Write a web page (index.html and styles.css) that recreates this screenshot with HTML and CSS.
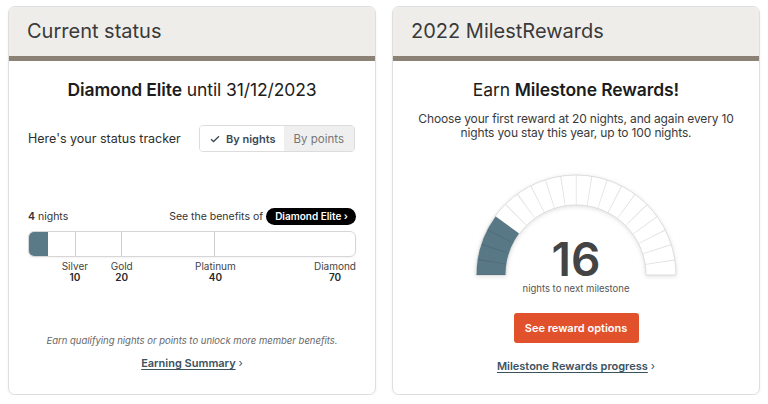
FILE: index.html
```html
<!DOCTYPE html>
<html>
<head>
<meta charset="utf-8">
<link rel="stylesheet" href="styles.css">
</head>
<body>
<div class="page">
  <section class="card">
    <header class="card-head">Current status</header>
    <div class="card-body">
      <h2 class="title"><b>Diamond Elite</b> until 31/12/2023</h2>
      <div class="tracker-row">
        <span class="tracker-label">Here's your status tracker</span>
        <div class="toggle">
          <span class="opt active"><svg class="check" viewBox="0 0 12 10" width="10" height="8"><path d="M1 5.2 L4.2 8.2 L11 1.5" fill="none" stroke="#3b4a55" stroke-width="1.6"/></svg>By nights</span>
          <span class="opt">By points</span>
        </div>
      </div>
      <div class="bar-head">
        <span class="nights"><b>4</b> nights</span>
        <span class="benefits">See the benefits of <span class="pill">Diamond Elite ›</span></span>
      </div>
      <div class="bar">
        <div class="fill" style="width:5.7%"></div>
        <div class="seg" style="width:8.58%"></div>
        <div class="seg" style="width:14.29%"></div>
        <div class="seg" style="width:28.57%"></div>
      </div>
      <div class="levels">
        <div class="lvl" style="left:14.29%"><span>Silver</span><b>10</b></div>
        <div class="lvl" style="left:28.57%"><span>Gold</span><b>20</b></div>
        <div class="lvl" style="left:57.14%"><span>Platinum</span><b>40</b></div>
        <div class="lvl last"><span>Diamond</span><b>70</b></div>
      </div>
      <div class="foot">
        <p class="note">Earn qualifying nights or points to unlock more member benefits.</p>
        <a class="link">Earning Summary</a><span class="chev">›</span>
      </div>
    </div>
  </section>
  <section class="card">
    <header class="card-head">2022 MilestRewards</header>
    <div class="card-body center">
      <h2 class="title">Earn <b>Milestone Rewards!</b></h2>
      <p class="desc">Choose your first reward at 20 nights, and again every 10<br>nights you stay this year, up to 100 nights.</p>
      <svg class="gauge" viewBox="0 0 210 106" width="210" height="106">
        <path d="M5 105 A100 100 0 0 1 205 105 L175 105 A70 70 0 0 0 35 105 Z" fill="#fff" stroke="#dcdcdc" stroke-width="1"/>
        <path d="M20 105 A85 85 0 0 1 190 105" fill="none" stroke="#587886" stroke-width="29" stroke-dasharray="53.4 1000"/>
        <path d="M20 105 A85 85 0 0 1 190 105" fill="none" stroke="rgba(0,0,0,0.12)" stroke-width="29" stroke-dasharray="0.8 12.552" stroke-dashoffset="0.4"/>
      </svg>
      <div class="count">16</div>
      <div class="count-label">nights to next milestone</div>
      <button class="btn">See reward options</button>
      <div class="link-row"><a class="link">Milestone Rewards progress</a><span class="chev">›</span></div>
    </div>
  </section>
</div>
</body>
</html>
```
FILE: styles.css
```css
* { box-sizing: border-box; }
html, body { margin: 0; padding: 0; background: #fff; }
body { font-family: Inter, "Noto Sans", sans-serif; color: #2b2b2b; }
.page {
  display: flex;
  gap: 16px;
  padding: 6px 8px 0 8px;
}
.card {
  width: 368px;
  height: 389px;
  border: 1px solid #dedede;
  border-radius: 7px;
  overflow: hidden;
  display: flex;
  flex-direction: column;
  box-shadow: 0 1px 3px rgba(0,0,0,0.05);
}
.card-head {
  height: 54px;
  background: #efedea;
  border-bottom: 5px solid #8b8275;
  padding: 0 0 0 18px;
  font-size: 20px;
  line-height: 48px;
  color: #3a3a3a;
  font-weight: 400;
}
.card-body {
  flex: 1;
  padding: 0 19px;
  display: flex;
  flex-direction: column;
}
.card-body.center { align-items: center; text-align: center; }
.title {
  margin: 17px 0 0 0;
  font-size: 17.5px;
  line-height: 24px;
  font-weight: 400;
  text-align: center;
  color: #1c1c1c;
  letter-spacing: -0.1px;
}
.title b { font-weight: 600; }
.tracker-row {
  margin-top: 23px;
  display: flex;
  justify-content: space-between;
  align-items: center;
}
.tracker-label { font-size: 12.5px; color: #2e2e2e; }
.toggle {
  display: flex;
  height: 27px;
  border: 1px solid #dcdcdc;
  border-radius: 4px;
  overflow: hidden;
  margin-right: 1px;
}
.opt {
  display: flex;
  align-items: center;
  white-space: nowrap;
  font-size: 11.5px;
  color: #777;
  background: #efefef;
  padding: 0 10px 0 10px;
}
.opt.active {
  background: #fff;
  color: #3b4a55;
  font-weight: 600;
  font-size: 11px;
  padding: 0 8px 0 10px;
}
.check { margin-right: 6px; }
.bar-head {
  margin-top: 56px;
  display: flex;
  justify-content: space-between;
  align-items: center;
  height: 17px;
}
.nights { font-size: 10.5px; color: #333; }
.nights b { font-weight: 600; }
.benefits { font-size: 10.5px; color: #333; display: flex; align-items: center; gap: 3px; }
.pill {
  background: #000;
  color: #fff;
  font-weight: 600;
  border-radius: 9px;
  height: 17px;
  line-height: 17px;
  padding: 0 8px 0 9px;
  font-size: 10px;
}
.bar {
  margin-top: 6px;
  height: 26px;
  border: 1px solid #d6d6d6;
  border-radius: 6px;
  overflow: hidden;
  display: flex;
  box-shadow: 0 1px 2px rgba(0,0,0,0.05);
}
.fill { background: #5b7a88; height: 100%; }
.seg { height: 100%; border-right: 1px solid #cfcfcf; }
.levels {
  position: relative;
  height: 24px;
  margin-top: 4px;
  font-size: 10px;
  color: #444;
}
.lvl {
  position: absolute;
  top: 0;
  transform: translateX(-50%);
  display: flex;
  flex-direction: column;
  align-items: center;
  line-height: 11px;
}
.lvl b { font-weight: 600; color: #2a2a2a; }
.lvl.last { left: auto; right: 0; transform: none; }
.foot {
  margin-top: auto;
  padding-bottom: 23px;
  text-align: center;
}
.note {
  margin: 0 0 3px 0;
  font-style: italic;
  font-size: 9.5px;
  line-height: 14px;
  color: #666;
}
.link {
  font-size: 11px;
  font-weight: 600;
  color: #3b5261;
  text-decoration: underline;
  text-underline-offset: 2px;
  line-height: 16px;
}
.chev { font-size: 11px; color: #3b5261; margin-left: 3px; }
.desc {
  margin: 10px 0 0 0;
  font-size: 12px;
  line-height: 14px;
  color: #3a3a3a;
  white-space: nowrap;
  letter-spacing: -0.15px;
}
.gauge {
  margin-top: 30px;
  display: block;
  filter: drop-shadow(0 1px 2px rgba(0,0,0,0.12));
}
.count {
  margin-top: -36px;
  font-size: 46px;
  line-height: 38px;
  font-weight: 600;
  color: #444;
}
.count-label {
  margin-top: 5px;
  font-size: 9.5px;
  line-height: 12px;
  color: #555;
}
.btn {
  margin-top: 18px;
  width: 125px;
  height: 30px;
  border: none;
  border-radius: 3px;
  background: #e1512c;
  color: #fff;
  font-family: inherit;
  font-weight: 600;
  font-size: 11px;
  padding: 0;
}
.link-row { margin-top: 13px; line-height: 16px; }
```
